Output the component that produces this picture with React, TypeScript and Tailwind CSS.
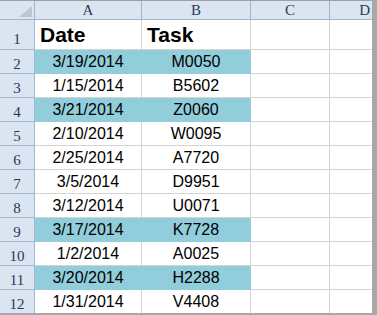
import React from 'react';

const rows = [
  { date: '3/19/2014', task: 'M0050', hl: true },
  { date: '1/15/2014', task: 'B5602', hl: false },
  { date: '3/21/2014', task: 'Z0060', hl: true },
  { date: '2/10/2014', task: 'W0095', hl: false },
  { date: '2/25/2014', task: 'A7720', hl: false },
  { date: '3/5/2014', task: 'D9951', hl: false },
  { date: '3/12/2014', task: 'U0071', hl: false },
  { date: '3/17/2014', task: 'K7728', hl: true },
  { date: '1/2/2014', task: 'A0025', hl: false },
  { date: '3/20/2014', task: 'H2288', hl: true },
  { date: '1/31/2014', task: 'V4408', hl: false },
];

const headFont = { fontFamily: '"Liberation Serif", serif' };
const cellFont = { fontFamily: '"Liberation Sans", Arial, sans-serif' };

const grid = 'grid grid-cols-[35px_107px_109px_79px_1fr]';

const App: React.FC = () => {
  return (
    <div className="w-[377px] h-[315px] bg-[#a8a8a8]">
      <div className="w-[372px] h-[313px] overflow-hidden bg-white border-t border-[#a0a0a0]">
        {/* column headers */}
        <div
          className={`${grid} h-[19px] bg-[#dbe5f1] border-b border-[#9eb6ce] text-[15px] text-[#1f3a5f]`}
          style={headFont}
        >
          <div className="relative border-r border-[#9eb6ce]">
            <svg className="absolute right-[2px] bottom-[2px]" width="13" height="11" viewBox="0 0 13 11">
              <polygon points="13,0 13,11 0,11" fill="#bcc6d3" />
            </svg>
          </div>
          {['A', 'B', 'C', 'D'].map((c, i) => (
            <div
              key={c}
              className={`flex items-center leading-none ${i === 3 ? 'justify-end pr-[2px]' : 'justify-center border-r border-[#9eb6ce]'}`}
            >
              {c}
            </div>
          ))}
        </div>

        {/* row 1 */}
        <div className={`${grid} h-[30px]`}>
          <div
            className="flex items-end justify-center pb-[2px] bg-[#dbe5f1] border-r border-b border-[#9eb6ce] text-[15px] leading-none text-[#1f3a5f]"
            style={headFont}
          >
            1
          </div>
          <div className="flex items-end pl-[5px] pb-[4px] border-r border-b border-[#d4d4d4] text-[21px] font-bold leading-none text-black" style={cellFont}>
            Date
          </div>
          <div className="flex items-end pl-[5px] pb-[4px] border-r border-b border-[#d4d4d4] text-[21px] font-bold leading-none text-black" style={cellFont}>
            Task
          </div>
          <div className="border-r border-b border-[#d4d4d4]" />
          <div className="border-b border-[#d4d4d4]" />
        </div>

        {rows.map((r, i) => (
          <div key={i} className={`${grid} h-[24px]`}>
            <div
              className="flex items-end justify-center pb-[1px] bg-[#dbe5f1] border-r border-b border-[#9eb6ce] text-[15px] leading-none text-[#1f3a5f]"
              style={headFont}
            >
              {i + 2}
            </div>
            <div
              className={`flex items-center justify-center border-r border-b text-[16px] leading-none text-black ${r.hl ? 'bg-[#92cddc] border-[#92cddc]' : 'border-[#d4d4d4]'}`}
              style={cellFont}
            >
              {r.date}
            </div>
            <div
              className={`flex items-center justify-center border-r border-b text-[16px] leading-none text-black ${r.hl ? 'bg-[#92cddc] border-[#92cddc]' : 'border-[#d4d4d4]'}`}
              style={cellFont}
            >
              {r.task}
            </div>
            <div className="border-r border-b border-[#d4d4d4]" />
            <div className="border-b border-[#d4d4d4]" />
          </div>
        ))}
      </div>
    </div>
  );
};

export default App;
